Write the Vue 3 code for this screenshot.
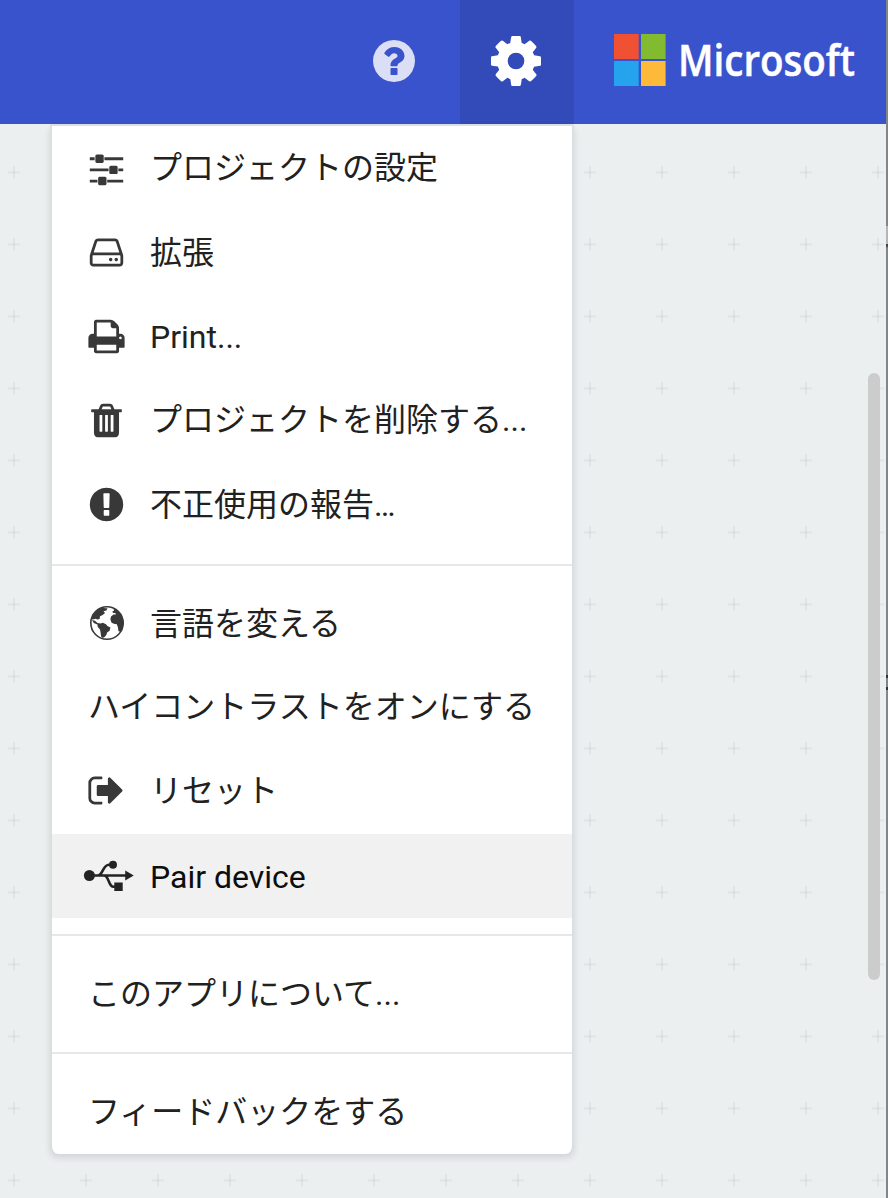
<script setup>
import {ref} from 'vue'

const hovered = ref('pair')

// icon paths live on a 1792 unit grid
const icons = {
    help: 'M1024 1376v-192q0-14-9-23t-23-9h-192q-14 0-23 9t-9 23v192q0 14 9 23t23 9h192q14 0 23-9t9-23zm256-672q0-88-55.5-163t-138.5-116-170-41q-243 0-371 213-15 24 8 42l132 100q7 6 19 6 16 0 25-12 53-68 86-92 34-24 86-24 48 0 85.5 26t37.5 59q0 38-20 61t-68 45q-63 28-115.5 86.5t-52.5 125.5v36q0 14 9 23t23 9h192q14 0 23-9t9-23q0-19 21.5-49.5t54.5-49.5q32-18 49-28.5t46-35 44.5-48 28-60.5 12.5-81zm384 192q0 209-103 385.5t-279.5 279.5-385.5 103-385.5-103-279.5-279.5-103-385.5 103-385.5 279.5-279.5 385.5-103 385.5 103 279.5 279.5 103 385.5z',
    cog: 'M1152 896q0-106-75-181t-181-75-181 75-75 181 75 181 181 75 181-75 75-181zm512-109v222q0 12-8 23t-20 13l-185 28q-19 54-39 91 35 50 107 138 10 12 10 25t-9 23q-27 37-99 108t-94 71q-12 0-26-9l-138-108q-44 23-91 38-16 136-29 186-7 28-36 28h-222q-14 0-24.5-8.5t-11.5-21.5l-28-184q-49-16-90-37l-141 107q-10 9-25 9-14 0-25-11-126-114-165-168-7-10-7-23 0-12 8-23 15-21 51-66.5t54-70.5q-27-50-41-99l-183-27q-13-2-21-12.5t-8-23.5v-222q0-12 8-23t19-13l186-28q14-46 39-92-40-57-107-138-10-12-10-24 0-10 9-23 26-36 98.5-107.5t94.5-71.5q13 0 26 10l138 107q44-23 91-38 16-136 29-186 7-28 36-28h222q14 0 24.5 8.5t11.5 21.5l28 184q49 16 90 37l142-107q9-9 24-9 13 0 25 10 129 119 165 170 7 8 7 22 0 12-8 23-15 21-51 66.5t-54 70.5q26 50 41 98l183 28q13 2 21 12.5t8 23.5z',
    sliders: 'M480 1408v128h-352v-128h352zm352-128q26 0 45 19t19 45v256q0 26-19 45t-45 19h-256q-26 0-45-19t-19-45v-256q0-26 19-45t45-19h256zm160-384v128h-864v-128h864zm-640-512v128h-224v-128h224zm1312 1024v128h-736v-128h736zm-960-1152q26 0 45 19t19 45v256q0 26-19 45t-45 19h-256q-26 0-45-19t-19-45v-256q0-26 19-45t45-19h256zm640 512q26 0 45 19t19 45v256q0 26-19 45t-45 19h-256q-26 0-45-19t-19-45v-256q0-26 19-45t45-19h256zm320 128v128h-224v-128h224zm0-512v128h-864v-128h864z',
    disk: 'M1168 1216q0 33-23.5 56.5t-56.5 23.5-56.5-23.5-23.5-56.5 23.5-56.5 56.5-23.5 56.5 23.5 23.5 56.5zm256 0q0 33-23.5 56.5t-56.5 23.5-56.5-23.5-23.5-56.5 23.5-56.5 56.5-23.5 56.5 23.5 23.5 56.5zm112 160v-320q0-13-9.5-22.5t-22.5-9.5h-1216q-13 0-22.5 9.5t-9.5 22.5v320q0 13 9.5 22.5t22.5 9.5h1216q13 0 22.5-9.5t9.5-22.5zm-1230-480h1180l-157-482q-4-13-16-21.5t-26-8.5h-782q-14 0-26 8.5t-16 21.5zm1358 160v320q0 66-47 113t-113 47h-1216q-66 0-113-47t-47-113v-320q0-25 16-75l197-606q17-53 63-86t101-33h782q55 0 101 33t63 86l197 606q16 50 16 75z',
    print: 'M448 1536h896v-256h-896v256zm0-640h896v-384h-160q-40 0-68-28t-28-68v-160h-640v640zm1152 64q0-26-19-45t-45-19-45 19-19 45 19 45 45 19 45-19 19-45zm128 0v416q0 13-9.5 22.5t-22.5 9.5h-224v160q0 40-28 68t-68 28h-960q-40 0-68-28t-28-68v-160h-224q-13 0-22.5-9.5t-9.5-22.5v-416q0-79 56.5-135.5t135.5-56.5h64v-544q0-40 28-68t68-28h672q40 0 88 20t76 48l152 152q28 28 48 76t20 88v256h64q79 0 135.5 56.5t56.5 135.5z',
    trash: 'M704 1376v-704q0-14-9-23t-23-9h-64q-14 0-23 9t-9 23v704q0 14 9 23t23 9h64q14 0 23-9t9-23zm256 0v-704q0-14-9-23t-23-9h-64q-14 0-23 9t-9 23v704q0 14 9 23t23 9h64q14 0 23-9t9-23zm256 0v-704q0-14-9-23t-23-9h-64q-14 0-23 9t-9 23v704q0 14 9 23t23 9h64q14 0 23-9t9-23zm-544-992h448l-48-117q-7-9-17-11h-317q-10 2-17 11zm928 32v64q0 14-9 23t-23 9h-96v948q0 83-47 143.5t-113 60.5h-832q-66 0-113-58.5t-47-141.5v-952h-96q-14 0-23-9t-9-23v-64q0-14 9-23t23-9h309l70-167q15-37 54-63t79-26h320q40 0 79 26t54 63l70 167h309q14 0 23 9t9 23z',
    report: 'M896 128q209 0 385.5 103t279.5 279.5 103 385.5-103 385.5-279.5 279.5-385.5 103-385.5-103-279.5-279.5-103-385.5 103-385.5 279.5-279.5 385.5-103zm128 1247v-190q0-14-9-23.5t-22-9.5h-192q-13 0-23 10t-10 23v190q0 13 10 23t23 10h192q13 0 22-9.5t9-23.5zm-2-344l18-621q0-12-10-18-10-8-24-8h-220q-14 0-24 8-10 6-10 18l17 621q0 10 10 17.5t24 7.5h185q14 0 23.5-7.5t10.5-17.5z',
    signout: 'M704 1440q0 4 1 20t.5 26.5-3 23.5-10 19.5-20.5 6.5h-320q-119 0-203.5-84.5t-84.5-203.5v-704q0-119 84.5-203.5t203.5-84.5h320q13 0 22.5 9.5t9.5 22.5q0 4 1 20t.5 26.5-3 23.5-10 19.5-20.5 6.5h-320q-66 0-113 47t-47 113v704q0 66 47 113t113 47h312l11.5 1 11.5 3 8 5.5 7 9 2 13.5zm928-544q0 26-19 45l-544 544q-19 19-45 19t-45-19-19-45v-288h-448q-26 0-45-19t-19-45v-384q0-26 19-45t45-19h448v-288q0-26 19-45t45-19 45 19l544 544q19 19 19 45z',
}

const groups = [
    [
        {id: 'project', icon: 'sliders', label: 'プロジェクトの設定'},
        {id: 'extensions', icon: 'disk', label: '拡張'},
        {id: 'print', icon: 'print', label: 'Print...'},
        {id: 'delete', icon: 'trash', label: 'プロジェクトを削除する...'},
        {id: 'report', icon: 'report', label: '不正使用の報告…'},
    ],
    [
        {id: 'language', icon: 'globe', label: '言語を変える'},
        {id: 'contrast', label: 'ハイコントラストをオンにする'},
        {id: 'reset', icon: 'signout', label: 'リセット'},
        {id: 'pair', icon: 'usb', label: 'Pair device'},
    ],
    [{id: 'about', label: 'このアプリについて...'}],
    [{id: 'feedback', label: 'フィードバックをする'}],
]
</script>

<template>
    <div class="editor">
        <header class="menubar">
            <button class="bar-item help" title="Help">
                <svg viewBox="128 128 1536 1536"><path :d="icons.help"/></svg>
            </button>
            <button class="bar-item settings active" title="Settings">
                <svg viewBox="128 128 1536 1536"><path :d="icons.cog"/></svg>
            </button>
            <div class="brand">
                <svg class="brand-mark" viewBox="0 0 52 52">
                    <path fill="#f05133" d="M0 0h24.7v25H0z"/>
                    <path fill="#82ba30" d="M27 0h24.6v25H27z"/>
                    <path fill="#26a3ed" d="M0 27h24.7v25H0z"/>
                    <path fill="#fdb93a" d="M27 27h24.6v25H27z"/>
                </svg>
                <svg class="brand-name" viewBox="0 0 176 52">
                    <text x="-1" y="41.5" textLength="177" lengthAdjust="spacingAndGlyphs">Microsoft</text>
                </svg>
            </div>
        </header>

        <main class="workspace">
            <svg class="grid">
                <defs>
                    <pattern id="cross" width="72" height="72" patternUnits="userSpaceOnUse">
                        <path d="M8 47.3h12v2H8z"/>
                        <path d="M13 42.3h2v12h-2z"/>
                    </pattern>
                </defs>
                <rect width="100%" height="100%" fill="url(#cross)"/>
            </svg>

            <nav class="menu">
                <ul v-for="(group, i) in groups" :key="i">
                    <li v-for="item in group" :key="item.id" :class="[item.id, {hover: hovered === item.id}]"
                        @mouseenter="hovered = item.id">
                        <span v-if="item.icon" class="icon">
                            <svg v-if="item.icon === 'usb'" class="usb" viewBox="0 0 50 30">
                                <circle cx="5.4" cy="14.5" r="5.5"/>
                                <circle cx="29" cy="3.8" r="4"/>
                                <path d="M30.3 21.6h8.4v8.4h-8.4zM41.2 9.4v10.2l8.6-5.1z"/>
                                <path class="line" d="M5 14.5h37M14 14.5c5 0 4.5-10.7 11-10.7h4M20 14.5c5 0 4.5 11.3 9.5 11.3h3"/>
                            </svg>
                            <svg v-else-if="item.icon === 'globe'" class="globe" viewBox="0 0 34 34">
                                <circle class="ring" cx="17" cy="17" r="16.2"/>
                                <path d="M3 9.5C5.5 5 9 2.5 13 1.3l2 1 2.6 0-1.2 2.2-2.9.8 1.5 1.6-2.3 2.2-2.7 1.2-.4 2.7-2.2.6-1.8-.8-2.6.6-1.500-.4z"/>
                                <path d="M2 14l3 .8 2.500 2.200 3 .6 2.300-.8 3.200 1.400 1.400 1.800 3 1.400-.8 3.300-2.500 1.700-.8 2.500-2.300 2.600-1.900.3-1-1.300-.5-4-.6-3-2.200-2.400-.4-2.600-3.600-1.500z"/>
                                <path d="M23.500 2.500l3 1.600c3.500 2.700 6 6.200 6.800 11.200.3 4-.8 7.700-2.900 10.700l-2-1-.4-3.500-1.200-3.200-3-.6-2.400-1.300-1-3.200.6-2.600 2.600-2 2.200-.2-.4-1.500-2.400.2-.6-1.500 1.700-1.200z"/>
                            </svg>
                            <svg v-else viewBox="0 0 1792 1792"><path :d="icons[item.icon]"/></svg>
                        </span>
                        <span class="label">{{ item.label }}</span>
                    </li>
                </ul>
            </nav>

            <div class="scrollbar"></div>
        </main>
        <div class="window-edge"></div>
    </div>
</template>

<style>
body {
    margin: 0;
    overflow: hidden;
}
</style>

<style scoped>
.editor {
    position: relative;
    display: flex;
    flex-direction: column;
    width: 888px;
    height: 1198px;
    overflow: hidden;
    background: #ebeff0;
    font-family: Roboto, "Noto Sans CJK JP", sans-serif;
}

.menubar {
    display: flex;
    flex-shrink: 0;
    justify-content: flex-end;
    height: 124px;
    background: #3953cc;
}

.bar-item {
    display: flex;
    align-items: center;
    justify-content: center;
    width: 114px;
    margin: 0;
    padding: 0 2px 3px 0;
    border: 0;
    box-sizing: border-box;
    background: transparent;
}

.bar-item.active {
    background: #334bb8;
}

.bar-item.help {
    width: 130px;
}

.help svg {
    width: 42px;
    height: 42px;
    fill: #dadff5;
}

.settings svg {
    width: 50px;
    height: 50px;
    fill: #fff;
}

.brand {
    display: flex;
    align-items: center;
    gap: 13px;
    width: 314px;
    padding: 0 0 4px 40px;
    box-sizing: border-box;
}

.brand-mark {
    width: 52px;
    height: 52px;
}

.brand-name {
    width: 176px;
    height: 52px;
    overflow: visible;
    fill: #fff;
    stroke: #fff;
    stroke-width: 0.5;
    font-family: "Open Sans", sans-serif;
    font-size: 43px;
    font-weight: 600;
}

.workspace {
    position: relative;
    flex: 1;
    padding-left: 50px;
}

.grid {
    position: absolute;
    top: 0;
    left: 0;
    width: 100%;
    height: 100%;
    fill: rgba(60, 70, 70, 0.065);
}

.menu {
    position: relative;
    width: 520px;
    border: 2px solid #dcdedf;
    border-bottom-width: 0;
    border-radius: 0 0 8px 8px;
    background: #fff;
    background-clip: padding-box;
    box-shadow: 0 4px 6px rgba(34, 36, 38, 0.12);
}

ul {
    margin: 0;
    padding: 0;
    list-style: none;
}

ul + ul {
    margin-top: 16px;
    padding-top: 16px;
    border-top: 2px solid #e6e7e7;
}

ul:first-child {
    padding-bottom: 2px;
}

li {
    display: flex;
    align-items: center;
    height: 84px;
    padding-left: 36px;
    box-sizing: border-box;
    color: #212121;
    font-size: 32px;
    line-height: 40px;
    white-space: nowrap;
}

li.hover {
    background: #f1f1f1;
    color: #0d0d0d;
}

.extensions .label,
.print .label,
.report .label,
.pair .label {
    padding-top: 2px;
}

.contrast,
.reset {
    padding-bottom: 3px;
}

.icon {
    display: flex;
    flex-shrink: 0;
    align-items: center;
    justify-content: center;
    width: 38px;
    height: 39px;
    margin: 0 25px 0 -1px;
    fill: #383838;
}

.icon svg {
    flex-shrink: 0;
    width: 39px;
    height: 39px;
}

.icon .globe {
    width: 34px;
    height: 34px;
    margin: 0 0 2px 2px;
}

.ring {
    fill: none;
    stroke: #383838;
    stroke-width: 1.6;
}

.icon .usb {
    width: 50px;
    height: 30px;
    margin-left: 5px;
    overflow: visible;
    fill: #232323;
}

.line {
    fill: none;
    stroke: #232323;
    stroke-width: 2.6;
}

.scrollbar {
    position: absolute;
    top: 249px;
    right: 8px;
    width: 12px;
    height: 607px;
    border-radius: 6px;
    background: #ccc;
}

/* sliver of the window behind */
.window-edge {
    position: absolute;
    top: 0;
    right: 0;
    width: 2px;
    height: 100%;
    background: linear-gradient(#858585 226px, #b5b5b5 226px 244px, #444 244px 246px, #81868a 248px 675px, #333 675px 678px, #81868a 678px 687px, #333 687px 690px, #81868a 690px);
}
</style>
